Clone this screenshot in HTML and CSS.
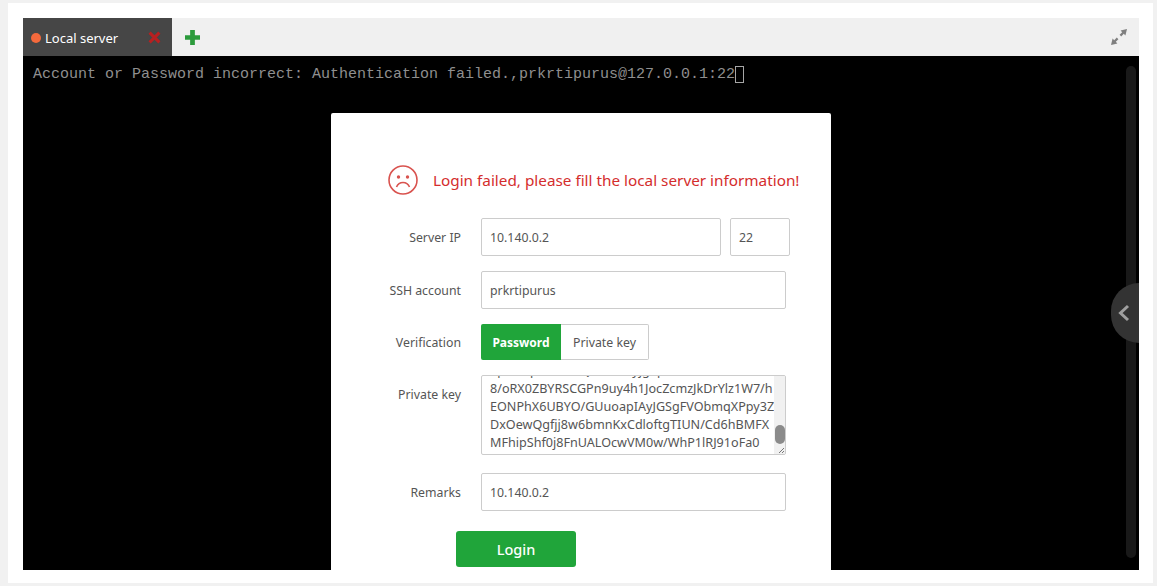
FILE: index.html
```html
<!DOCTYPE html>
<html lang="en">
<head>
<meta charset="utf-8">
<title>Local server</title>
<link rel="stylesheet" href="styles.css">
</head>
<body>
<main class="panel">
  <div class="tabbar">
    <div class="tab">
      <span class="tab-dot"></span>
      <span class="tab-name">Local server</span>
      <svg class="tab-close" viewBox="0 0 12 12"><path d="M1.500 1.500 10.500 10.500M10.500 1.500 1.500 10.500" stroke="#b82020" stroke-width="2.800" fill="none"/></svg>
    </div>
    <svg class="tab-add" viewBox="0 0 14 14"><path d="M7 0V14M0 7H14" stroke="#2c9b3c" stroke-width="4.400" fill="none"/></svg>
    <svg class="expand" viewBox="0 0 18 18"><path d="M17 1 10.600 2.600 12.200 4.200 9.600 6.800 11.200 8.400 13.800 5.800 15.400 7.400ZM1 17 7.400 15.400 5.800 13.800 8.400 11.200 6.800 9.600 4.200 12.200 2.600 10.600Z" fill="#7f7f7f"/></svg>
  </div>
  <div class="terminal">
    <div class="term-line">Account or Password incorrect: Authentication failed.,prkrtipurus@127.0.0.1:22<span class="cursor"></span></div>
    <div class="term-scroll"></div>
    <div class="side-handle">
      <svg viewBox="0 0 14 18"><path d="M11 2 3.500 9 11 16" stroke="#a0a0a0" stroke-width="3" fill="none"/></svg>
    </div>
    <form class="modal">
      <div class="notice">
        <svg class="sad" viewBox="0 0 30 30">
          <circle cx="15" cy="15" r="14" fill="none" stroke="#d9534f" stroke-width="1.600"/>
          <circle cx="10.500" cy="12" r="1.700" fill="#d9534f"/>
          <circle cx="19.500" cy="12" r="1.700" fill="#d9534f"/>
          <path d="M8.500 22C10 18.500 12.500 17.500 15 17.500S20 18.500 21.500 22" fill="none" stroke="#d9534f" stroke-width="1.600"/>
        </svg>
        <span class="notice-text">Login failed, please fill the local server information!</span>
      </div>
      <div class="row">
        <div class="label">Server IP</div>
        <div class="field field-ip">10.140.0.2</div>
        <div class="field field-port">22</div>
      </div>
      <div class="row">
        <div class="label">SSH account</div>
        <div class="field field-wide">prkrtipurus</div>
      </div>
      <div class="row row-toggle">
        <div class="label">Verification</div>
        <div class="toggle">
          <div class="toggle-on">Password</div>
          <div class="toggle-off">Private key</div>
        </div>
      </div>
      <div class="row row-key">
        <div class="label label-key">Private key</div>
        <div class="keybox">
          <div class="key-text">
            <div>+p7xkqP1mT6vQ3aLsn0yjgXp2hWd9cUeRt4ZbK</div>
            <div>8/oRX0ZBYRSCGPn9uy4h1JocZcmzJkDrYlz1W7/h</div>
            <div>EONPhX6UBYO/GUuoapIAyJGSgFVObmqXPpy3Z</div>
            <div>DxOewQgfjj8w6bmnKxCdloftgTIUN/Cd6hBMFX</div>
            <div>MFhipShf0j8FnUALOcwVM0w/WhP1lRJ91oFa0</div>
          </div>
          <div class="key-track"><div class="key-thumb"></div></div>
          <svg class="key-grip" viewBox="0 0 8 8"><path d="M7 2 2 7M7 5 5 7" stroke="#777" stroke-width="1" fill="none"/></svg>
        </div>
      </div>
      <div class="row row-remarks">
        <div class="label">Remarks</div>
        <div class="field field-wide">10.140.0.2</div>
      </div>
      <button class="login" type="button">Login</button>
    </form>
  </div>
</main>
</body>
</html>
```
FILE: styles.css
```css
* { box-sizing: border-box; }
html, body { height: 100%; }
body {
  margin: 0;
  padding: 3px 4px 3px 8px;
  background: #f1f1f1;
  font-family: "Noto Sans", "Open Sans", sans-serif;
  overflow: hidden;
}
.panel {
  height: 580px;
  background: #fff;
  padding: 15px 14px 13px 15px;
  display: flex;
  flex-direction: column;
}
.tabbar {
  height: 38px;
  flex: none;
  background: #f0f0f0;
  display: flex;
  align-items: center;
}
.tab {
  width: 149px;
  height: 38px;
  background: #464646;
  color: #fff;
  display: flex;
  align-items: center;
  padding: 1px 0 0 8px;
  font-size: 13px;
}
.tab-dot {
  width: 10px;
  height: 10px;
  border-radius: 50%;
  background: #f4693c;
  margin-right: 4px;
}
.tab-name { width: 103px; }
.tab-close { width: 13px; height: 13px; }
.tab-add { width: 15px; height: 15px; margin-left: 13px; }
.expand { width: 18px; height: 18px; margin-left: auto; margin-right: 11px; }
.terminal {
  position: relative;
  flex: 1;
  background: #000;
  padding: 9px 10px;
  overflow: hidden;
}
.term-line {
  font-family: "Liberation Mono", monospace;
  font-size: 15px;
  line-height: 19px;
  color: #8f8f8f;
  display: flex;
  white-space: pre;
}
.cursor {
  width: 9px;
  height: 17px;
  margin-top: 1px;
  border: 1px solid #a6a6a6;
}
.term-scroll {
  position: absolute;
  top: 10px;
  bottom: 12px;
  right: 3px;
  width: 10px;
  border-radius: 5px;
  background: #191919;
}
.side-handle {
  position: absolute;
  top: 227px;
  right: 0;
  width: 28px;
  height: 60px;
  background: #333;
  border-radius: 30px 0 0 30px;
  display: flex;
  align-items: center;
  padding-left: 6px;
}
.side-handle svg { width: 14px; height: 18px; }
.modal {
  position: absolute;
  left: 308px;
  top: 57px;
  width: 500px;
  height: 457px;
  background: #fff;
  border-radius: 2px 2px 0 0;
  overflow: hidden;
  padding-top: 52px;
}
.notice {
  display: flex;
  align-items: center;
  height: 30px;
  margin-left: 57px;
  margin-bottom: 23px;
  white-space: nowrap;
}
.sad { width: 30px; height: 30px; margin-right: 15px; flex: none; }
.notice-text { font-size: 15.3px; color: #d42d2d; }
.row {
  display: flex;
  align-items: center;
  margin-bottom: 15px;
  font-size: 12.3px;
  color: #555;
}
.label {
  width: 130px;
  margin-right: 20px;
  text-align: right;
}
.field {
  height: 38px;
  border: 1px solid #ccc;
  border-radius: 2px;
  padding: 0 8px;
  display: flex;
  align-items: center;
}
.field-ip { width: 240px; margin-right: 9px; }
.field-port { width: 60px; }
.field-wide { width: 305px; }
.row-toggle { height: 36px; }
.toggle { display: flex; height: 36px; }
.toggle-on {
  width: 80px;
  background: #20a53a;
  color: #fff;
  font-size: 12px;
  font-weight: 700;
  border-radius: 2px 0 0 2px;
  display: flex;
  align-items: center;
  justify-content: center;
}
.toggle-off {
  width: 88px;
  border: 1px solid #ccc;
  border-left: 0;
  border-radius: 0 2px 2px 0;
  display: flex;
  align-items: center;
  justify-content: center;
}
.row-key { align-items: flex-start; margin-bottom: 18px; }
.label-key { padding-top: 11px; line-height: 17px; }
.keybox {
  position: relative;
  width: 305px;
  height: 80px;
  border: 1px solid #ccc;
  border-radius: 2px;
  overflow: hidden;
}
.key-text {
  position: absolute;
  left: 8px;
  bottom: 2px;
  font-size: 12.6px;
  line-height: 18px;
  white-space: nowrap;
}
.key-track {
  position: absolute;
  top: 0;
  right: 0;
  width: 11px;
  height: 78px;
  background: #f1f1f1;
  padding: 2px 0 0 1px;
}
.key-thumb {
  width: 10px;
  height: 19px;
  margin-top: 47px;
  border-radius: 5px;
  background: #8b8b8b;
}
.key-grip {
  position: absolute;
  right: 0;
  bottom: 0;
  width: 8px;
  height: 8px;
}
.row-remarks { margin-bottom: 20px; }
.login {
  display: block;
  margin-left: 125px;
  width: 120px;
  height: 36px;
  background: #20a53a;
  color: #fff;
  border: 0;
  border-radius: 3px;
  font-family: inherit;
  font-size: 14.5px;
  font-weight: 500;
}
```
